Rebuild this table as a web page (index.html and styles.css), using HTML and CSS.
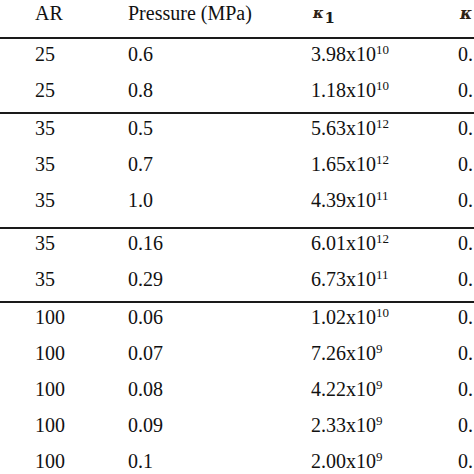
FILE: index.html
```html
<!DOCTYPE html>
<html lang="en">
<head>
    <meta charset="UTF-8">
    <meta name="viewport" content="width=device-width, initial-scale=1.0">
    <title>Permeability fit parameters</title>
    <link rel="stylesheet" href="styles.css">
</head>
<body>
    <div class="table">
        <div class="row head">
            <span>AR</span>
            <span>Pressure (MPa)</span>
            <span class="kappa">κ<sub>1</sub></span>
            <span class="kappa wide">κ</span>
        </div>
        <div class="group first">
            <div class="row"><span>25</span><span>0.6</span><span>3.98x10<sup>10</sup></span><span>0.</span></div>
            <div class="row"><span>25</span><span>0.8</span><span>1.18x10<sup>10</sup></span><span>0.</span></div>
        </div>
        <div class="group tall">
            <div class="row"><span>35</span><span>0.5</span><span>5.63x10<sup>12</sup></span><span>0.</span></div>
            <div class="row"><span>35</span><span>0.7</span><span>1.65x10<sup>12</sup></span><span>0.</span></div>
            <div class="row"><span>35</span><span>1.0</span><span>4.39x10<sup>11</sup></span><span>0.</span></div>
        </div>
        <div class="group">
            <div class="row"><span>35</span><span>0.16</span><span>6.01x10<sup>12</sup></span><span>0.</span></div>
            <div class="row"><span>35</span><span>0.29</span><span>6.73x10<sup>11</sup></span><span>0.</span></div>
        </div>
        <div class="group">
            <div class="row"><span>100</span><span>0.06</span><span>1.02x10<sup>10</sup></span><span>0.</span></div>
            <div class="row"><span>100</span><span>0.07</span><span>7.26x10<sup>9</sup></span><span>0.</span></div>
            <div class="row"><span>100</span><span>0.08</span><span>4.22x10<sup>9</sup></span><span>0.</span></div>
            <div class="row"><span>100</span><span>0.09</span><span>2.33x10<sup>9</sup></span><span>0.</span></div>
            <div class="row"><span>100</span><span>0.1</span><span>2.00x10<sup>9</sup></span><span>0.</span></div>
        </div>
    </div>
</body>
</html>
```

FILE: styles.css
```css
body { margin: 0; padding: 0; background: #fff; overflow: hidden; font-family: "Liberation Serif", "Times New Roman", serif; color: #111; }
.table { width: 560px; }
.row { display: grid; grid-template-columns: 93px 183px 147px 120px; padding: 3px 0 0 35px; height: 36px; box-sizing: border-box; font-size: 20px; line-height: 23px; white-space: nowrap; }
.row sup { font-size: 13px; line-height: 0; vertical-align: 7px; }
.head { height: 37px; padding-top: 2px; }
.group { border-top: 2px solid #1a1a1a; }
.group.first { padding-top: 1px; }
.group.tall { padding-bottom: 5px; }
.kappa { font-family: "DejaVu Serif", serif; font-weight: bold; font-style: italic; font-size: 14px; color: #2b2118; margin-left: 2px; text-shadow: 0.5px 0 0 rgba(190, 110, 40, 0.6); }
.kappa.wide { font-size: 16px; }
.kappa sub { font-style: normal; font-size: 15px; color: #1a1a1a; vertical-align: -5px; line-height: 0; margin-left: 1px; text-shadow: none; }
```
